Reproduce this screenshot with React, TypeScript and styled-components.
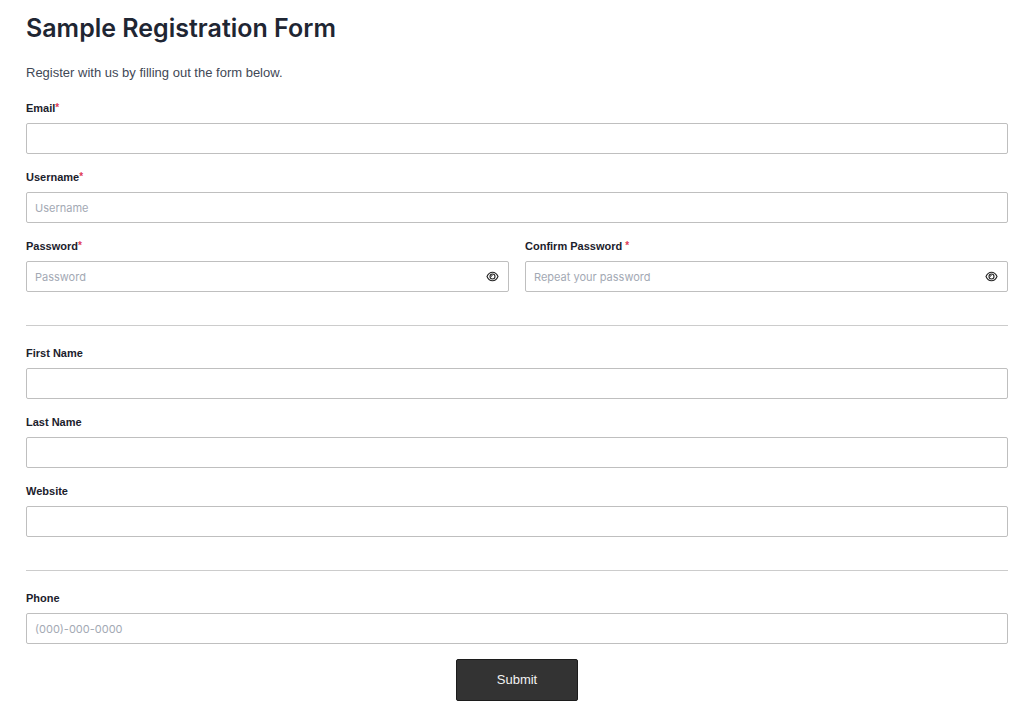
import React, { useState } from "react";
import styled, { createGlobalStyle } from "styled-components";

const GlobalStyle = createGlobalStyle`
  *, *::before, *::after { box-sizing: border-box; }
  body {
    margin: 0;
    background: #fff;
    color: #1f2633;
    font-family: "Liberation Sans", Arial, sans-serif;
  }
`;

const Page = styled.main`
  padding: 12px 16px 24px 26px;
`;

const Title = styled.h1`
  margin: 0;
  font: 600 25px/32px Inter, sans-serif;
  color: #1f2633;
`;

const Intro = styled.p`
  margin: 19px 0 17px;
  font-size: 13px;
  line-height: 20px;
  color: #3f4856;
`;

const Form = styled.form`
  display: flex;
  flex-direction: column;
`;

const Group = styled.div`
  display: flex;
  flex-direction: column;
  gap: 15px;
`;

const Columns = styled.div`
  display: grid;
  grid-template-columns: 1fr 1fr;
  gap: 16px;
`;

const FieldBox = styled.div`
  display: flex;
  flex-direction: column;
  gap: 7px;
`;

const Label = styled.label`
  font-size: 11px;
  font-weight: 700;
  line-height: 16px;
  color: #1b212c;
`;

const Star = styled.span`
  color: #e03a56;
  font-size: 10px;
  line-height: 10px;
  vertical-align: 1px;
`;

const InputFrame = styled.div`
  display: flex;
  align-items: center;
  height: 31px;
  padding-right: 9px;
  border: 1px solid #bfbfbf;
  border-radius: 2px;
  &:focus-within { border-color: #333; }
`;

const Input = styled.input`
  flex: 1;
  min-width: 0;
  height: 100%;
  padding: 0 8px;
  border: 0;
  outline: 0;
  background: transparent;
  font: 400 11px/16px Inter, sans-serif;
  color: #1f2633;
  &::placeholder { color: #a3a9b4; opacity: 1; }
`;

const Toggle = styled.button`
  display: flex;
  padding: 0;
  border: 0;
  background: none;
  color: #222;
  cursor: pointer;
`;

const Divider = styled.hr`
  width: 100%;
  height: 1px;
  margin: 33px 0 19px;
  border: 0;
  background: #cccccc;
`;

const Submit = styled.button`
  align-self: center;
  margin-top: 15px;
  padding: 10px 40px;
  border: 1px solid #1c1c1c;
  border-radius: 2px;
  background: #333;
  color: #f2f2f2;
  font: 400 13px/20px "Liberation Sans", Arial, sans-serif;
  cursor: pointer;
`;

const EyeIcon = () => (
  <svg width="13" height="13" viewBox="0 0 13 13" fill="none" stroke="currentColor" aria-hidden="true">
    <path d="M1 6.5C2.2 3.8 4.200 2.300 6.500 2.300S10.800 3.800 12 6.500C10.800 9.200 8.800 10.700 6.500 10.700S2.200 9.200 1 6.500Z" strokeWidth="1.100" />
    <circle cx="6.500" cy="6.500" r="2.500" strokeWidth="1.100" />
    <path d="M5.300 6.700a1.300 1.300 0 0 1 1.300-1.400" strokeWidth="1" />
  </svg>
);

type FieldProps = {
  id: string;
  label: string;
  type?: string;
  placeholder?: string;
  required?: boolean;
};

function Field({ id, label, type = "text", placeholder, required }: FieldProps) {
  const [visible, setVisible] = useState(false);
  const secret = type === "password";
  return (
    <FieldBox>
      <Label htmlFor={id}>
        {label}
        {required && <Star>*</Star>}
      </Label>
      <InputFrame>
        <Input
          id={id}
          name={id}
          type={secret && visible ? "text" : type}
          placeholder={placeholder}
          required={required}
        />
        {secret && (
          <Toggle type="button" aria-label="Show password" aria-pressed={visible} onClick={() => setVisible(!visible)}>
            <EyeIcon />
          </Toggle>
        )}
      </InputFrame>
    </FieldBox>
  );
}

export default function App() {
  return (
    <Page>
      <GlobalStyle />
      <Title>Sample Registration Form</Title>
      <Intro>Register with us by filling out the form below.</Intro>
      <Form onSubmit={(e) => e.preventDefault()}>
        <Group>
          <Field id="email" label="Email" type="email" required />
          <Field id="username" label="Username" placeholder="Username" required />
          <Columns>
            <Field id="password" label="Password" type="password" placeholder="Password" required />
            <Field id="confirm" label="Confirm Password " type="password" placeholder="Repeat your password" required />
          </Columns>
        </Group>
        <Divider />
        <Group>
          <Field id="first-name" label="First Name" />
          <Field id="last-name" label="Last Name" />
          <Field id="website" label="Website" type="url" />
        </Group>
        <Divider />
        <Field id="phone" label="Phone" type="tel" placeholder="(000)-000-0000" />
        <Submit type="submit">Submit</Submit>
      </Form>
    </Page>
  );
}
